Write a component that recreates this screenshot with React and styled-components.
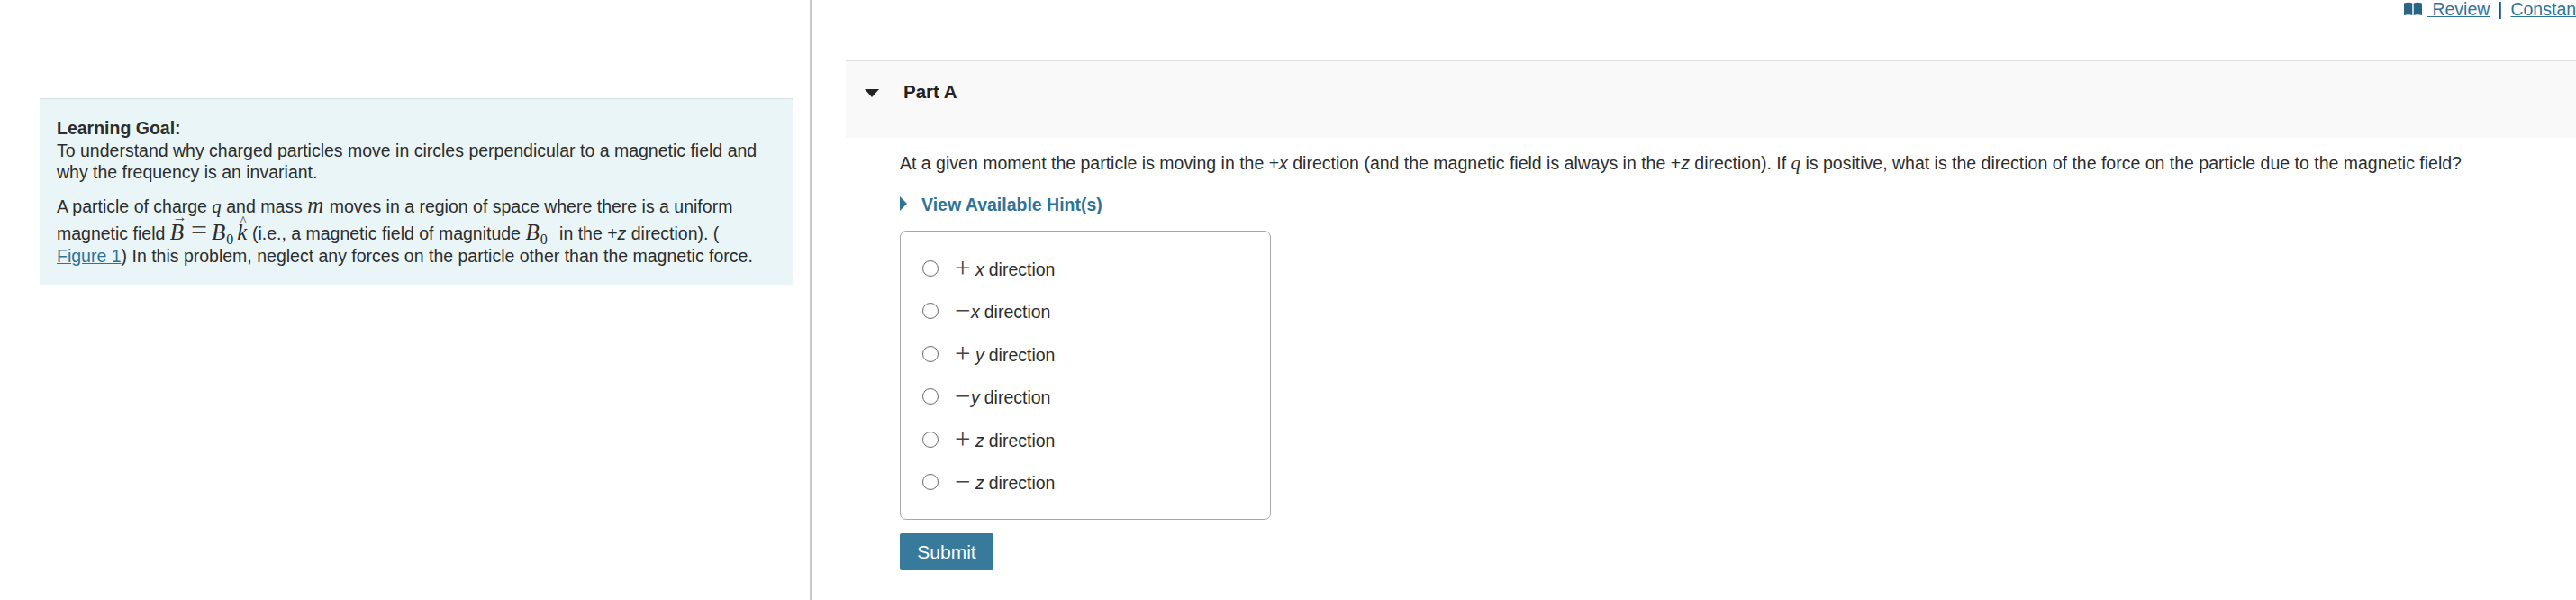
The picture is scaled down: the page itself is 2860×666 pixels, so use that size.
import React from "react";
import styled, { createGlobalStyle } from "styled-components";

const GlobalStyle = createGlobalStyle`
  html, body {
    margin: 0;
    padding: 0;
    background: #fff;
    overflow: hidden;
  }
  body {
    font-family: "Liberation Sans", Arial, sans-serif;
    font-size: 19.5px;
    color: #2d2d2d;
  }
`;

const Page = styled.div`
  display: flex;
  width: 2860px;
  height: 666px;
  overflow: hidden;
`;

const LeftPane = styled.div`
  flex: 0 0 901px;
  box-sizing: border-box;
  border-right: 2px solid #c6cacd;
  padding: 109px 0 0 44px;
`;

const GoalBox = styled.div`
  box-sizing: border-box;
  height: 207px;
  width: 836px;
  background: #e9f5f7;
  border-top: 1px solid #d5e1e6;
  padding: 20px 18px 0 19px;
  line-height: 24.5px;
`;

const GoalTitle = styled.div`
  font-weight: bold;
`;

const GoalPara = styled.p`
  margin: 13px 0 0;
  line-height: 24.5px;
`;

const MathLine = styled.span`
  display: inline-block;
  margin-top: 6px;
`;

const TextLink = styled.a`
  color: #2f7398;
  text-decoration: underline;
`;

const MathVar = styled.i`
  font-family: "Liberation Serif", serif;
  font-size: ${props => props.size || 25}px;
  line-height: 0;
  letter-spacing: ${props => props.gap || 0}px;
`;

const MathOp = styled.span`
  font-family: "Liberation Serif", serif;
  font-size: 32px;
  line-height: 0;
  margin: 0 5px;
  color: #444;
`;

const MathSub = styled.sub`
  font-family: "Liberation Serif", serif;
  font-size: 16px;
  line-height: 0;
  margin-right: ${props => props.after}px;
`;

const Accent = styled.span`
  position: relative;
  display: inline-block;
  line-height: 0;
  &::before {
    content: "${props => props.mark}";
    position: absolute;
    left: ${props => props.shift}px;
    top: ${props => props.lift}px;
    font-family: "Liberation Serif", serif;
    font-style: normal;
    font-size: 16px;
    line-height: 16px;
    color: #444;
  }
`;

const RightPane = styled.div`
  flex: 1;
  min-width: 0;
  padding-left: 38px;
  overflow: hidden;
`;

const TopLinks = styled.div`
  height: 67px;
  box-sizing: border-box;
  padding-left: 1730px;
  display: flex;
  align-items: flex-start;
  white-space: nowrap;
  line-height: 20px;
`;

const BookIcon = styled.svg`
  width: 20px;
  height: 15px;
  margin: 2px 6px 0 0;
  flex: none;
`;

const Separator = styled.span`
  margin: 0 9px;
`;

const PartHeader = styled.div`
  box-sizing: border-box;
  height: 86px;
  background: #f9f9f9;
  border-top: 1px solid #dddddd;
  display: flex;
  align-items: flex-start;
  padding: 22px 0 0 21px;
  font-size: 20.5px;
  font-weight: bold;
  line-height: 24px;
  color: #222;
`;

const CaretDown = styled.span`
  width: 0;
  height: 0;
  border-left: 8px solid transparent;
  border-right: 8px solid transparent;
  border-top: 9px solid #222;
  margin: 9px 27px 0 0;
`;

const PartBody = styled.div`
  padding-left: 60px;
`;

const Question = styled.p`
  margin: 16px 0 0;
  line-height: 24px;
  white-space: nowrap;
`;

const HintToggle = styled.div`
  display: flex;
  align-items: center;
  margin-top: 22px;
  color: #2f7398;
  font-weight: bold;
  line-height: 24px;
`;

const CaretRight = styled.span`
  width: 0;
  height: 0;
  border-top: 8px solid transparent;
  border-bottom: 8px solid transparent;
  border-left: 8px solid #2f7398;
  margin: -3px 16px 0 0;
`;

const ChoiceBox = styled.div`
  box-sizing: border-box;
  width: 412px;
  height: 321px;
  margin-top: 17px;
  border: 1px solid #a8a8a8;
  border-radius: 7px;
  padding: 18.5px 0 0 24px;
  display: flex;
  flex-direction: column;
`;

const Choice = styled.label`
  display: flex;
  align-items: center;
  height: 47.5px;
`;

const Radio = styled.span`
  box-sizing: border-box;
  width: 18px;
  height: 18px;
  border: 1.5px solid #6b6b6b;
  border-radius: 50%;
  margin: -3px 18px 0 0;
  flex: none;
`;

const ChoiceText = styled.span`
  display: flex;
  align-items: baseline;
`;

const Sign = styled.span`
  font-family: "Liberation Serif", serif;
  font-size: 31px;
  line-height: 0;
  width: ${props => props.width}px;
  color: #444;
  transform: translateY(2px);
`;

const AxisName = styled.i`
  margin-right: 5px;
`;

const SubmitButton = styled.button`
  display: block;
  width: 104px;
  height: 41px;
  margin-top: 15px;
  background: #377a9c;
  border: 0;
  border-radius: 2px;
  color: #fff;
  font: 21px "Liberation Sans", Arial, sans-serif;
  padding: 0;
`;

const choices = [
  { sign: "+", axis: "x", width: 23 },
  { sign: "\u2212", axis: "x", width: 18 },
  { sign: "+", axis: "y", width: 23 },
  { sign: "\u2212", axis: "y", width: 18 },
  { sign: "+", axis: "z", width: 23 },
  { sign: "\u2212", axis: "z", width: 23 }
];

function App() {
  return (
    <Page>
      <GlobalStyle />
      <LeftPane>
        <GoalBox>
          <GoalTitle>Learning Goal:</GoalTitle>
          <div>
            To understand why charged particles move in circles perpendicular to a magnetic field and why the frequency is an invariant.
          </div>
          <GoalPara>
            A particle of charge <MathVar size={21}>q</MathVar> and mass <MathVar gap={1}>m</MathVar> moves in a region of space where there is a uniform
            <br />
            <MathLine>
              magnetic field{" "}
              <Accent mark="→" shift={3} lift={-25}><MathVar gap={3}>B</MathVar></Accent>
              <MathOp>=</MathOp>
              <MathVar gap={1}>B</MathVar><MathSub after={4}>0</MathSub>
              <Accent mark="^" shift={3} lift={-20}><MathVar>k</MathVar></Accent> (i.e., a magnetic field of magnitude{" "}
              <MathVar gap={1}>B</MathVar><MathSub after={8}>0</MathSub> in the +<i>z</i> direction). (
            </MathLine>
            <br />
            <TextLink>Figure 1</TextLink>) In this problem, neglect any forces on the particle other than the magnetic force.
          </GoalPara>
        </GoalBox>
      </LeftPane>
      <RightPane>
        <TopLinks>
          <BookIcon viewBox="0 0 20 15">
            <path d="M0 1.5 Q5 0 9.3 1.5 V15 Q5 13.5 0 15Z M10.7 1.5 Q15 0 20 1.5 V15 Q15 13.5 10.7 15Z" fill="#2a6684" />
          </BookIcon>
          <TextLink>&nbsp;Review</TextLink>
          <Separator>|</Separator>
          <TextLink>Constants</TextLink>
        </TopLinks>
        <PartHeader>
          <CaretDown />
          Part A
        </PartHeader>
        <PartBody>
          <Question>
            At a given moment the particle is moving in the +<i>x</i> direction (and the magnetic field is always in the +<i>z</i> direction). If <MathVar size={21}>q</MathVar> is positive, what is the direction of the force on the particle due to the magnetic field?
          </Question>
          <HintToggle>
            <CaretRight />
            View Available Hint(s)
          </HintToggle>
          <ChoiceBox>
            {choices.map(choice => (
              <Choice key={choice.sign + choice.axis}>
                <Radio />
                <ChoiceText>
                  <Sign width={choice.width}>{choice.sign}</Sign>
                  <AxisName>{choice.axis}</AxisName>
                  direction
                </ChoiceText>
              </Choice>
            ))}
          </ChoiceBox>
          <SubmitButton>Submit</SubmitButton>
        </PartBody>
      </RightPane>
    </Page>
  );
}

export default App;
